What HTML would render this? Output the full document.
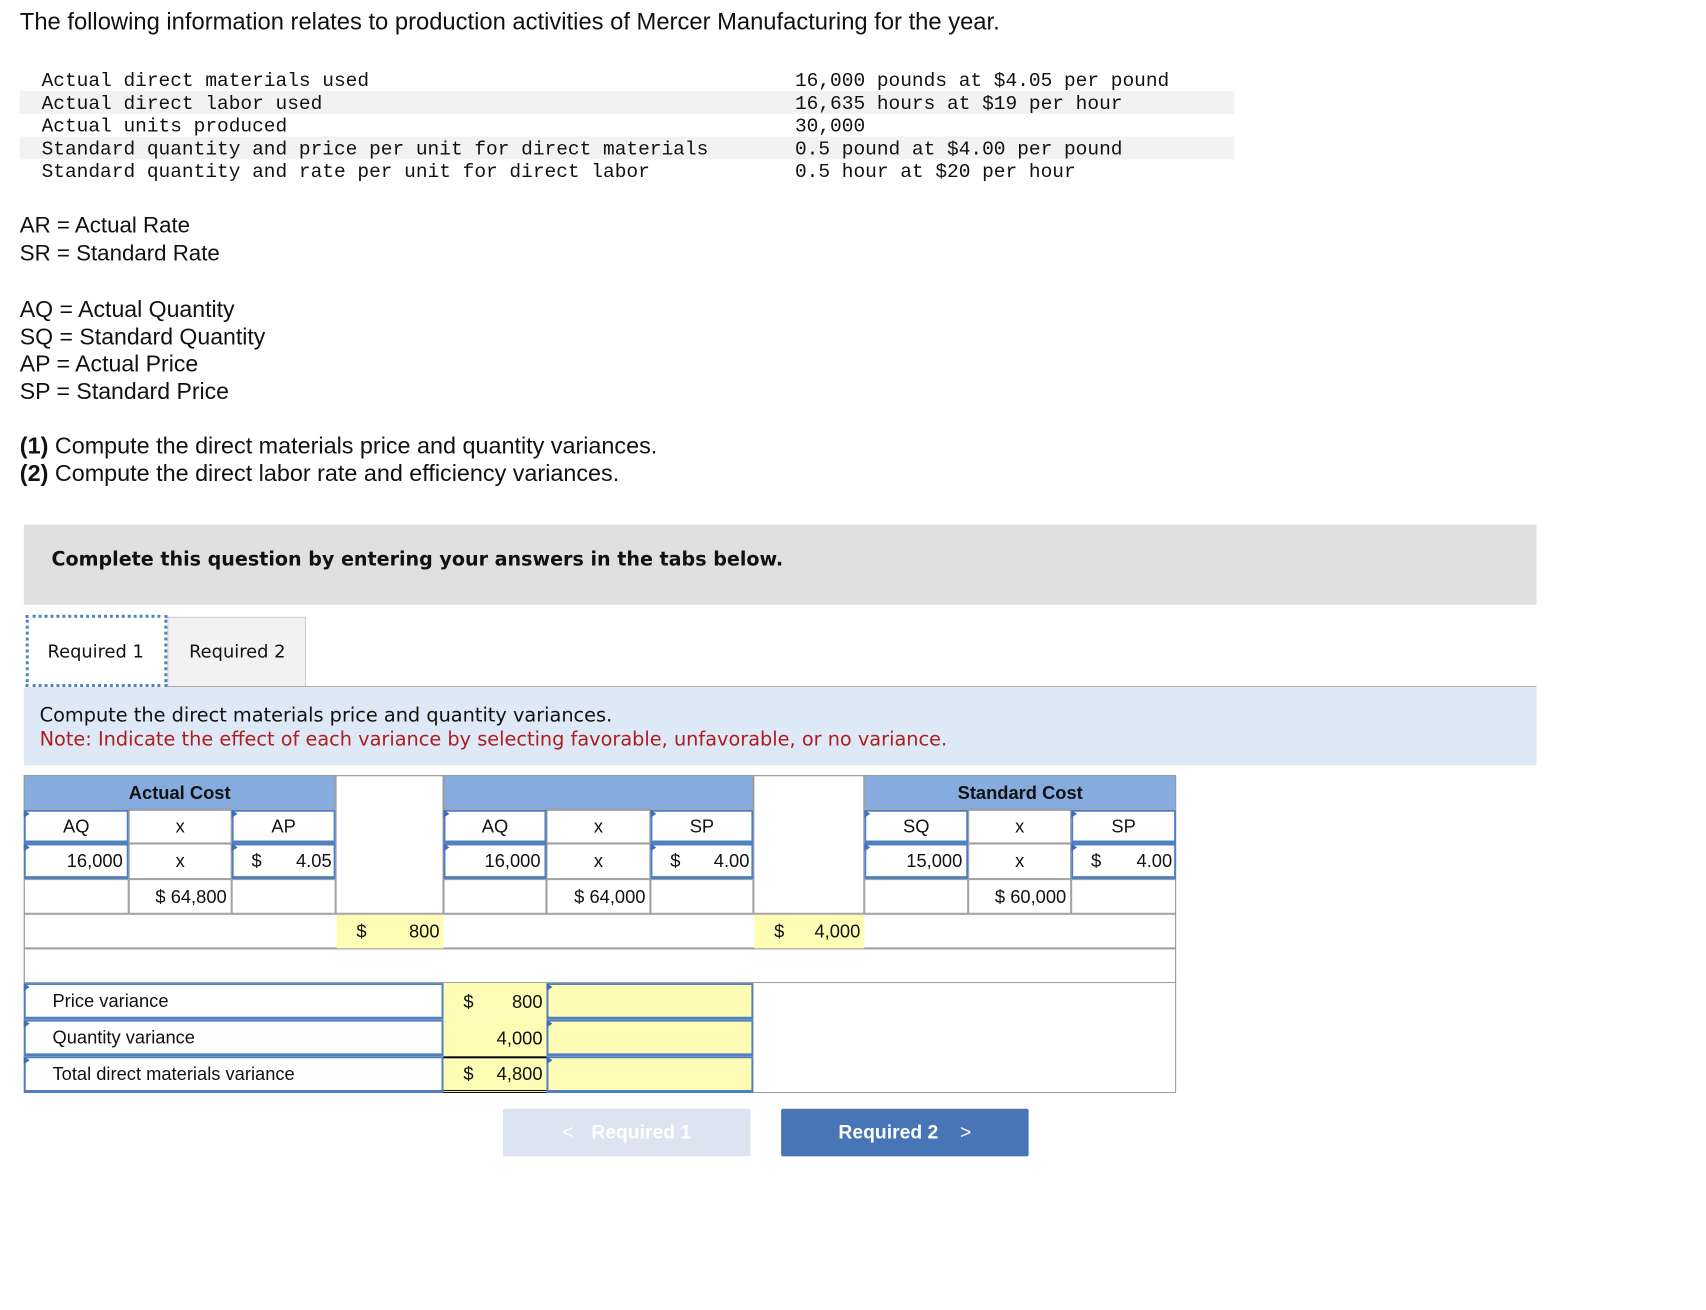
<!DOCTYPE html>
<html><head><meta charset="utf-8"><style>
body{margin:0;width:1706px;height:1310px;background:#fff;font-family:"Liberation Sans",sans-serif;color:#111;position:relative;overflow:hidden}
#w{position:absolute;left:0;top:0;width:1706px;height:1310px;transform:scale(0.99);transform-origin:0 0}
.a{position:absolute}
.mono{font-family:"Liberation Mono",monospace;font-size:19.7px;white-space:pre}
.t{font-size:22.5px;white-space:nowrap}
.c{position:absolute;box-sizing:border-box;font-size:18.5px;display:flex;align-items:center;white-space:nowrap}
.g{border:1px solid #999}
.in{border:2px solid #4f7fc0;border-bottom-width:3px;background:#fff}
.in::before{content:"";position:absolute;left:-2px;top:-2px;border-left:6px solid #3b6fc0;border-top:4px solid transparent;border-bottom:4px solid transparent}
.y{background:#fffcb5}
.hd{background:#86acdf;font-weight:bold;justify-content:center}
</style></head><body><div id="w">
<div class="a t" style="left:20px;top:9px;font-size:24px">The following information relates to production activities of Mercer Manufacturing for the year.</div>
<div class="a" style="left:20px;top:92px;width:1227px;height:23px;background:#f2f2f2"></div>
<div class="a" style="left:20px;top:138px;width:1227px;height:23px;background:#f2f2f2"></div>
<div class="a mono" style="left:42px;top:71px;line-height:23px">Actual direct materials used
Actual direct labor used
Actual units produced
Standard quantity and price per unit for direct materials
Standard quantity and rate per unit for direct labor</div>
<div class="a mono" style="left:803px;top:71px;line-height:23px">16,000 pounds at $4.05 per pound
16,635 hours at $19 per hour
30,000
0.5 pound at $4.00 per pound
0.5 hour at $20 per hour</div>
<div class="a t" style="left:20px;top:214px;line-height:27.5px">AR = Actual Rate<br>SR = Standard Rate</div>
<div class="a t" style="left:20px;top:299px;line-height:27.5px;font-size:23.3px">AQ = Actual Quantity<br>SQ = Standard Quantity<br>AP = Actual Price<br>SP = Standard Price</div>
<div class="a t" style="left:20px;top:438px;line-height:27.5px;font-size:23.6px"><b>(1)</b> Compute the direct materials price and quantity variances.<br><b>(2)</b> Compute the direct labor rate and efficiency variances.</div>
<div class="a" style="left:24px;top:530px;width:1528px;height:81px;background:#e0e0e0"></div>
<div class="a" style="left:52px;top:553px;font-weight:bold;font-family:'DejaVu Sans',sans-serif;font-size:19.3px">Complete this question by entering your answers in the tabs below.</div>
<div class="a" style="left:169px;top:623px;width:140px;height:71px;background:#f2f2f2;border:1px solid #ccc;box-sizing:border-box"></div>
<div class="a" style="left:26px;top:621px;width:143px;height:73px;border:3px dotted #4f7fc0;box-sizing:border-box;background:#fff"></div>
<div class="a" style="left:48px;top:648px;font-size:18px;font-family:'DejaVu Sans',sans-serif">Required 1</div>
<div class="a" style="left:191px;top:648px;font-size:18px;font-family:'DejaVu Sans',sans-serif">Required 2</div>
<div class="a" style="left:169px;top:693px;width:1383px;height:1px;background:#aaa"></div>
<div class="a" style="left:24px;top:694px;width:1528px;height:79px;background:#dde9f6"></div>
<div class="a" style="left:40px;top:711px;font-size:19.5px;font-family:'DejaVu Sans',sans-serif;line-height:24px;white-space:nowrap">Compute the direct materials price and quantity variances.<br><span style="color:#b01c1c">Note: Indicate the effect of each variance by selecting favorable, unfavorable, or no variance.</span></div>

<div class="a" style="left:24px;top:783px;width:1164px;height:321px;border:1px solid #999;box-sizing:border-box"></div>
<div class="c hd g" style="left:24px;top:783px;width:315px;height:35px">Actual Cost</div>
<div class="c hd g" style="left:448px;top:783px;width:313px;height:35px"></div>
<div class="c hd g" style="left:873px;top:783px;width:315px;height:35px">Standard Cost</div>
<div class="c g" style="left:339px;top:783px;width:109px;height:140px"></div>
<div class="c g" style="left:761px;top:783px;width:112px;height:140px"></div>

<div class="c in" style="left:24px;top:818px;width:106px;height:34px;justify-content:center">AQ</div>
<div class="c g" style="left:130px;top:818px;width:104px;height:34px;justify-content:center">x</div>
<div class="c g" style="left:130px;top:852px;width:104px;height:36px;justify-content:center">x</div>
<div class="c in" style="left:234px;top:818px;width:105px;height:34px;justify-content:center">AP</div>
<div class="c in" style="left:448px;top:818px;width:104px;height:34px;justify-content:center">AQ</div>
<div class="c g" style="left:552px;top:818px;width:105px;height:34px;justify-content:center">x</div>
<div class="c g" style="left:552px;top:852px;width:105px;height:36px;justify-content:center">x</div>
<div class="c in" style="left:657px;top:818px;width:104px;height:34px;justify-content:center">SP</div>
<div class="c in" style="left:873px;top:818px;width:105px;height:34px;justify-content:center">SQ</div>
<div class="c g" style="left:978px;top:818px;width:104px;height:34px;justify-content:center">x</div>
<div class="c g" style="left:978px;top:852px;width:104px;height:36px;justify-content:center">x</div>
<div class="c in" style="left:1082px;top:818px;width:106px;height:34px;justify-content:center">SP</div>

<div class="c in" style="left:24px;top:852px;width:106px;height:36px;justify-content:flex-end;padding-right:4px">16,000</div>
<div class="c in" style="left:234px;top:852px;width:105px;height:36px;justify-content:space-between;padding:0 2px 0 18px">$<span>4.05</span></div>
<div class="c in" style="left:448px;top:852px;width:104px;height:36px;justify-content:flex-end;padding-right:4px">16,000</div>
<div class="c in" style="left:657px;top:852px;width:104px;height:36px;justify-content:space-between;padding:0 2px 0 18px">$<span>4.00</span></div>
<div class="c in" style="left:873px;top:852px;width:105px;height:36px;justify-content:flex-end;padding-right:4px">15,000</div>
<div class="c in" style="left:1082px;top:852px;width:106px;height:36px;justify-content:space-between;padding:0 2px 0 18px">$<span>4.00</span></div>

<div class="c g" style="left:24px;top:888px;width:106px;height:35px"></div>
<div class="c g" style="left:130px;top:888px;width:104px;height:35px;justify-content:flex-end;padding-right:4px">$ 64,800</div>
<div class="c g" style="left:234px;top:888px;width:105px;height:35px"></div>
<div class="c g" style="left:448px;top:888px;width:104px;height:35px"></div>
<div class="c g" style="left:552px;top:888px;width:105px;height:35px;justify-content:flex-end;padding-right:4px">$ 64,000</div>
<div class="c g" style="left:657px;top:888px;width:104px;height:35px"></div>
<div class="c g" style="left:873px;top:888px;width:105px;height:35px"></div>
<div class="c g" style="left:978px;top:888px;width:104px;height:35px;justify-content:flex-end;padding-right:4px">$ 60,000</div>
<div class="c g" style="left:1082px;top:888px;width:106px;height:35px"></div>

<div class="c g" style="left:24px;top:923px;width:1164px;height:35px"></div>
<div class="c y" style="left:340px;top:924px;width:108px;height:34px;justify-content:space-between;padding:0 4px 0 20px">$<span>800</span></div>
<div class="c y" style="left:762px;top:924px;width:111px;height:34px;justify-content:space-between;padding:0 4px 0 20px">$<span>4,000</span></div>
<div class="c g" style="left:24px;top:958px;width:1164px;height:35px"></div>

<div class="c in" style="left:24px;top:993px;width:424px;height:37px;padding-left:27px">Price variance</div>
<div class="c in" style="left:24px;top:1030px;width:424px;height:37px;padding-left:27px">Quantity variance</div>
<div class="c in" style="left:24px;top:1067px;width:424px;height:37px;padding-left:27px">Total direct materials variance</div>
<div class="c y" style="left:448px;top:993px;width:104px;height:37px;justify-content:space-between;padding:0 4px 0 20px">$<span>800</span></div>
<div class="c y" style="left:448px;top:1030px;width:104px;height:37px;justify-content:flex-end;padding-right:4px">4,000</div>
<div class="c y" style="left:448px;top:1067px;width:104px;height:37px;justify-content:space-between;padding:0 4px 0 20px;border-top:2px solid #000;border-bottom:3px double #000">$<span>4,800</span></div>
<div class="c in y" style="left:552px;top:993px;width:209px;height:37px"></div>
<div class="c in y" style="left:552px;top:1030px;width:209px;height:37px"></div>
<div class="c in y" style="left:552px;top:1067px;width:209px;height:37px"></div>

<div class="c" style="left:508px;top:1120px;width:250px;height:48px;background:#dbe4f0;color:#fff;font-weight:bold;font-size:19.5px;justify-content:center;border-radius:2px"><span style="font-weight:normal;margin-right:18px">&lt;</span>Required 1</div>
<div class="c" style="left:789px;top:1120px;width:250px;height:48px;background:#4775b5;color:#fff;font-weight:bold;font-size:19.5px;justify-content:center;border-radius:2px">Required 2<span style="font-weight:normal;margin-left:22px">&gt;</span></div>
</div></body></html>
